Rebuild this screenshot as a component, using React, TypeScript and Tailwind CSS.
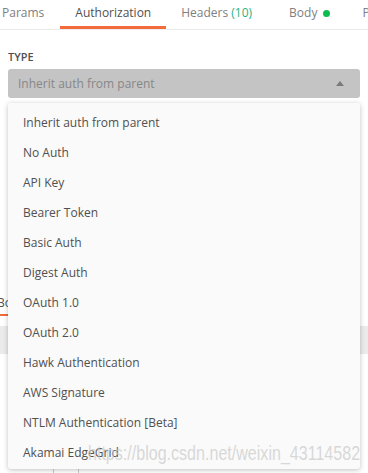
import React from 'react';

const authTypes = [
  'Inherit auth from parent',
  'No Auth',
  'API Key',
  'Bearer Token',
  'Basic Auth',
  'Digest Auth',
  'OAuth 1.0',
  'OAuth 2.0',
  'Hawk Authentication',
  'AWS Signature',
  'NTLM Authentication [Beta]',
  'Akamai EdgeGrid',
];

const App: React.FC = () => {
  return (
    <div className="w-[368px] h-[473px] relative overflow-hidden bg-white font-['Open_Sans',sans-serif] text-[#505050]">
      {/* Request tabs */}
      <div className="flex h-[30px] border-b border-[#ececec] text-[12px] whitespace-nowrap">
        <div className="-ml-[14px] px-4 pt-[4px] text-[#808080]">Params</div>
        <div className="px-[15px] pt-[4px] border-b-[3px] border-[#f26b3a] h-[29px] text-[#505050]">Authorization</div>
        <div className="px-[15px] pt-[4px] text-[#808080]">
          Headers <span className="text-[#26b47f]">(10)</span>
        </div>
        <div className="pl-[22px] pr-[16px] pt-[4px] text-[#808080] flex items-start gap-[6px]">
          Body <span className="mt-[6px] w-[7px] h-[7px] rounded-full bg-[#0cbb52]" />
        </div>
        <div className="pl-[16px] pt-[4px] text-[#808080]">Pre-request Script</div>
      </div>

      {/* Type select */}
      <div className="px-2 pt-[19px]">
        <div className="text-[11px] font-semibold text-[#505050] leading-[16px]">TYPE</div>
        <div className="mt-[4px] h-[29px] rounded-[3px] bg-[#c4c4c4] flex items-center justify-between pl-[10px] pr-[16px]">
          <span className="text-[12px] text-[#878787]">Inherit auth from parent</span>
          <span className="w-0 h-0 border-l-[4px] border-r-[4px] border-b-[5px] border-l-transparent border-r-transparent border-b-[#7a7a7a]" />
        </div>
      </div>

      {/* Content hidden behind the menu */}
      <div className="mt-[196px] flex h-[22px] text-[12px] whitespace-nowrap">
        <div className="-ml-[3px] pr-3 border-b-[2px] border-[#f26b3a] text-[#505050]">Body</div>
      </div>
      <div className="mt-[10px] h-[28px] bg-[#ebebeb]" />
      <div className="mt-[112px] flex h-[10px] items-end gap-6 pl-6">
        <span className="w-[5px] h-[3px] bg-[#4a7bd0]" />
        <span className="w-px h-[8px] bg-[#cccccc]" />
        <span className="w-px h-[8px] bg-[#cccccc]" />
        <span className="ml-16 w-[12px] h-[3px] bg-[#d05050]" />
        <span className="ml-8 w-[40px] h-[3px] bg-[#4a7bd0]" />
      </div>

      {/* Auth type menu */}
      <div className="absolute top-[103px] left-2 w-[352px] h-[366px] rounded-[3px] bg-[#fafafa] shadow-[0_1px_5px_rgba(0,0,0,0.25)] pt-[5px]">
        {authTypes.map((t) => (
          <div key={t} className="h-[30px] flex items-center px-[15px] text-[12px] text-[#505050]">
            {t}
          </div>
        ))}
      </div>

      {/* Watermark */}
      <div className="absolute left-[88px] top-[437px] origin-left scale-x-[0.765] text-[21px] font-['Liberation_Sans',sans-serif] text-[#c8c8c8]/70 whitespace-nowrap">
        https://blog.csdn.net/weixin_43114582
      </div>
    </div>
  );
};

export default App;
